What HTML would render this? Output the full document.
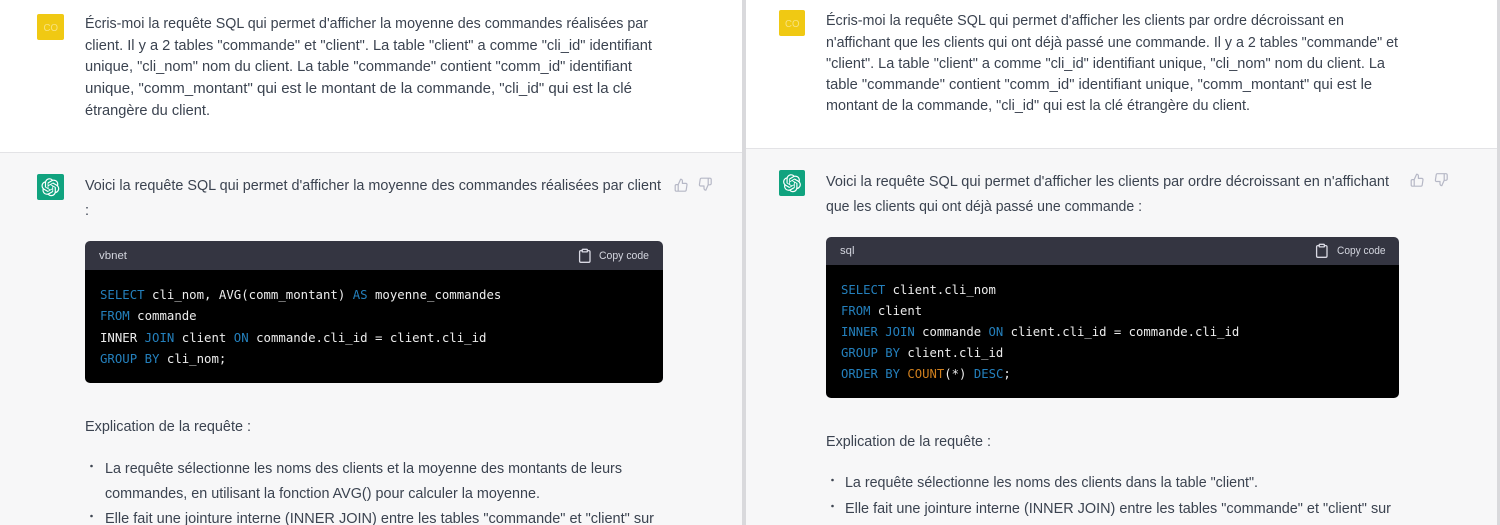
<!DOCTYPE html>
<html lang="fr"><head><meta charset="utf-8"><title>Requêtes SQL</title>
<style>
html,body{margin:0;padding:0;background:#fff;width:1500px;height:525px;overflow:hidden}
svg{display:block}
.t{font-family:"Liberation Sans",sans-serif;font-size:14.4px;fill:#3b4350}
.c{font-family:"DejaVu Sans Mono","Liberation Mono",monospace;font-size:12.35px;fill:#ececec}
.r{font-size:12.25px}
.k{fill:#2480bd}.o{fill:#cf7f1e}
.h{font-family:"Liberation Sans",sans-serif;font-size:10.8px;fill:#d3d5de}
.ic{fill:none;stroke:#b6b8c6;stroke-width:2;stroke-linecap:round;stroke-linejoin:round}
.cp{fill:none;stroke:#d9d9e3;stroke-width:2;stroke-linecap:round;stroke-linejoin:round}
</style></head><body>
<svg width="1500" height="525" viewBox="0 0 1500 525" xmlns="http://www.w3.org/2000/svg">
<defs><path id="g" fill="#fff" d="M37.5324 16.8707C37.9808 15.5241 38.1363 14.0974 37.9886 12.6859C37.8409 11.2744 37.3934 9.91076 36.676 8.68622C35.6126 6.83404 33.9882 5.3676 32.0373 4.4985C30.0864 3.62941 27.9098 3.40259 25.8215 3.85078C24.8796 2.7893 23.7219 1.94125 22.4257 1.36341C21.1295 0.785575 19.7249 0.491269 18.3058 0.500197C16.1708 0.495044 14.0893 1.16803 12.3614 2.42214C10.6335 3.67624 9.34853 5.44666 8.6917 7.47815C7.30085 7.76286 5.98686 8.3414 4.8377 9.17505C3.68854 10.0087 2.73073 11.0782 2.02839 12.312C0.956464 14.1591 0.498905 16.2988 0.721698 18.4228C0.944492 20.5467 1.83612 22.5449 3.268 24.1293C2.81966 25.4759 2.66413 26.9026 2.81182 28.3141C2.95951 29.7256 3.40701 31.0892 4.12437 32.3138C5.18791 34.1659 6.8123 35.6322 8.76321 36.5013C10.7141 37.3704 12.8907 37.5973 14.9789 37.1492C15.9208 38.2107 17.0786 39.0587 18.3747 39.6366C19.6709 40.2144 21.0755 40.5087 22.4946 40.4998C24.6307 40.5054 26.7133 39.8321 28.4418 38.5772C30.1704 37.3223 31.4556 35.5506 32.1119 33.5179C33.5027 33.2332 34.8167 32.6547 35.9659 31.821C37.115 30.9874 38.0728 29.9178 38.7752 28.684C39.8458 26.8371 40.3023 24.6979 40.0789 22.5748C39.8556 20.4517 38.9639 18.4544 37.5324 16.8707ZM22.4978 37.8849C20.7443 37.8874 19.0459 37.2733 17.6994 36.1501C17.7601 36.117 17.8666 36.0586 17.936 36.0161L25.9004 31.4156C26.1003 31.3019 26.2663 31.137 26.3813 30.9378C26.4964 30.7386 26.5563 30.5124 26.5549 30.2825V19.0542L29.9213 20.998C29.9389 21.0068 29.9541 21.0198 29.9656 21.0359C29.977 21.052 29.9842 21.0707 29.9867 21.0902V30.3889C29.9842 32.375 29.1946 34.2791 27.7909 35.6841C26.3872 37.0892 24.4838 37.8806 22.4978 37.8849ZM6.39227 31.0064C5.51397 29.4888 5.19742 27.7107 5.49804 25.9832C5.55718 26.0187 5.66048 26.0818 5.73461 26.1244L13.699 30.7248C13.8975 30.8408 14.1233 30.902 14.3532 30.902C14.583 30.902 14.8088 30.8408 15.0073 30.7248L24.731 25.1103V28.9979C24.7321 29.0177 24.7283 29.0376 24.7199 29.0556C24.7115 29.0736 24.6988 29.0893 24.6829 29.1012L16.6317 33.7497C14.9096 34.7416 12.8643 35.0097 10.9447 34.4954C9.02506 33.9811 7.38785 32.7263 6.39227 31.0064ZM4.29707 13.6194C5.17156 12.0998 6.55279 10.9364 8.19885 10.3327C8.19885 10.4013 8.19491 10.5228 8.19491 10.6071V19.808C8.19351 20.0378 8.25334 20.2638 8.36823 20.4629C8.48312 20.6619 8.64893 20.8267 8.84863 20.9404L18.5723 26.5542L15.206 28.4979C15.1894 28.5089 15.1703 28.5155 15.1505 28.5173C15.1307 28.5191 15.1107 28.516 15.0924 28.5082L7.04046 23.8557C5.32135 22.8601 4.06716 21.2235 3.55289 19.3046C3.03862 17.3858 3.30624 15.3413 4.29707 13.6194ZM31.955 20.0556L22.2312 14.4411L25.5976 12.4981C25.6142 12.4872 25.6333 12.4805 25.6531 12.4787C25.6729 12.4769 25.6928 12.4801 25.7111 12.4879L33.7631 17.1364C34.9967 17.849 36.0017 18.8982 36.6606 20.1613C37.3194 21.4244 37.6047 22.849 37.4832 24.2684C37.3617 25.6878 36.8382 27.0432 35.9743 28.1759C35.1103 29.3086 33.9415 30.1717 32.6047 30.6641C32.6047 30.5947 32.6047 30.4733 32.6047 30.3889V21.188C32.6066 20.9586 32.5474 20.7328 32.4332 20.5338C32.319 20.3348 32.154 20.1698 31.955 20.0556ZM35.3055 15.0128C35.2464 14.9765 35.1431 14.9142 35.069 14.8717L27.1045 10.2712C26.906 10.1554 26.6803 10.0943 26.4504 10.0943C26.2206 10.0943 25.9948 10.1554 25.7963 10.2712L16.0726 15.8858V11.9982C16.0715 11.9783 16.0753 11.9585 16.0837 11.9405C16.0921 11.9225 16.1048 11.9068 16.1207 11.8949L24.1719 7.25025C25.4053 6.53903 26.8158 6.19376 28.2383 6.25482C29.6608 6.31589 31.0364 6.78077 32.2044 7.59508C33.3723 8.40939 34.2842 9.53945 34.8334 10.8531C35.3826 12.1667 35.5464 13.6095 35.3055 15.0128ZM14.2424 21.9419L10.8752 19.9981C10.8576 19.9893 10.8423 19.9763 10.8309 19.9602C10.8195 19.9441 10.8122 19.9254 10.8098 19.9058V10.6071C10.8107 9.18295 11.2173 7.78848 11.9819 6.58696C12.7466 5.38544 13.8377 4.42659 15.1275 3.82264C16.4173 3.21869 17.8524 2.99464 19.2649 3.1767C20.6775 3.35876 22.0089 3.93941 23.1034 4.85067C23.0427 4.88379 22.937 4.94215 22.8668 4.98473L14.9024 9.58517C14.7025 9.69878 14.5366 9.86356 14.4215 10.0626C14.3065 10.2616 14.2466 10.4877 14.2479 10.7175L14.2424 21.9419ZM16.071 17.9991L20.4018 15.4978L24.7325 17.9975V22.9985L20.4018 25.4983L16.071 22.9985V17.9991Z"/></defs>

<rect width="1500" height="525" fill="#fff"/>
<rect x="0" y="153" width="742" height="372" fill="#f7f7f8"/>
<rect x="0" y="152" width="742" height="1" fill="#e3e3e6"/>
<rect x="746" y="149" width="751" height="376" fill="#f7f7f8"/>
<rect x="746" y="148" width="751" height="1" fill="#e3e3e6"/>
<rect x="742" y="0" width="4" height="525" fill="#d9d9dc"/>
<rect x="1497" y="0" width="3" height="525" fill="#d9d9dc"/>

<!-- LEFT user -->
<rect x="37" y="14" width="27" height="26" rx="2" fill="#f0c913"/>
<text x="43.500" y="31" textLength="14.500" lengthAdjust="spacingAndGlyphs" font-family="Liberation Sans,sans-serif" font-size="10.500" fill="#f8e27e">CO</text>
<text class="t" x="85" y="28" textLength="563" lengthAdjust="spacingAndGlyphs">Écris-moi la requête SQL qui permet d'afficher la moyenne des commandes réalisées par</text>
<text class="t" x="85" y="50" textLength="567" lengthAdjust="spacingAndGlyphs">client. Il y a 2 tables "commande" et "client". La table "client" a comme "cli_id" identifiant</text>
<text class="t" x="85" y="71" textLength="547" lengthAdjust="spacingAndGlyphs">unique, "cli_nom" nom du client. La table "commande" contient "comm_id" identifiant</text>
<text class="t" x="85" y="93" textLength="547" lengthAdjust="spacingAndGlyphs">unique, "comm_montant" qui est le montant de la commande, "cli_id" qui est la clé</text>
<text class="t" x="85" y="115" textLength="125" lengthAdjust="spacingAndGlyphs">étrangère du client.</text>

<!-- LEFT assistant -->
<rect x="37" y="174" width="27" height="26" rx="2" fill="#10a37f"/>
<use href="#g" transform="translate(41.2,178) scale(.45)"/>
<text class="t" x="85" y="190" textLength="576" lengthAdjust="spacingAndGlyphs">Voici la requête SQL qui permet d'afficher la moyenne des commandes réalisées par client</text>
<text class="t" x="85" y="215">:</text>
<g transform="translate(674,178) scale(.6)"><path class="ic" d="M14 9V5a3 3 0 0 0-3-3l-4 9v11h11.28a2 2 0 0 0 2-1.7l1.38-9a2 2 0 0 0-2-2.3zM7 22H4a2 2 0 0 1-2-2v-7a2 2 0 0 1 2-2h3"/></g>
<g transform="translate(698,177) scale(.6)"><path class="ic" d="M10 15v4a3 3 0 0 0 3 3l4-9V2H5.72a2 2 0 0 0-2 1.7l-1.38 9a2 2 0 0 0 2 2.3zm7-13h2.67A2.31 2.31 0 0 1 22 4v7a2.31 2.31 0 0 1-2.33 2H17"/></g>

<path d="M90 241H658a5 5 0 0 1 5 5V270H85V246a5 5 0 0 1 5-5Z" fill="#343541"/>
<path d="M85 270H663V378a5 5 0 0 1-5 5H90a5 5 0 0 1-5-5Z" fill="#000"/>
<text class="h" x="99" y="259" textLength="28" lengthAdjust="spacingAndGlyphs">vbnet</text>
<g transform="translate(577,248) scale(.65)"><path class="cp" d="M16 4h2a2 2 0 0 1 2 2v14a2 2 0 0 1-2 2H6a2 2 0 0 1-2-2V6a2 2 0 0 1 2-2h2"/><rect class="cp" x="8" y="2" width="8" height="4" rx="1"/></g>
<text class="h" x="599" y="259" textLength="50" lengthAdjust="spacingAndGlyphs">Copy code</text>
<text class="c" x="100" y="299" xml:space="preserve"><tspan class="k">SELECT</tspan> cli_nom, AVG(comm_montant) <tspan class="k">AS</tspan> moyenne_commandes</text>
<text class="c" x="100" y="320" xml:space="preserve"><tspan class="k">FROM</tspan> commande</text>
<text class="c" x="100" y="342" xml:space="preserve">INNER <tspan class="k">JOIN</tspan> client <tspan class="k">ON</tspan> commande.cli_id = client.cli_id</text>
<text class="c" x="100" y="363" xml:space="preserve"><tspan class="k">GROUP BY</tspan> cli_nom;</text>

<text class="t" x="85" y="431" textLength="166" lengthAdjust="spacingAndGlyphs">Explication de la requête :</text>
<circle cx="91.5" cy="466" r="1.3" fill="#3f4652"/>
<text class="t" x="105" y="473" textLength="517" lengthAdjust="spacingAndGlyphs">La requête sélectionne les noms des clients et la moyenne des montants de leurs</text>
<text class="t" x="105" y="498" textLength="435" lengthAdjust="spacingAndGlyphs">commandes, en utilisant la fonction AVG() pour calculer la moyenne.</text>
<circle cx="91.5" cy="516" r="1.3" fill="#3f4652"/>
<text class="t" x="105" y="523" textLength="549" lengthAdjust="spacingAndGlyphs">Elle fait une jointure interne (INNER JOIN) entre les tables "commande" et "client" sur</text>

<!-- RIGHT user -->
<rect x="779" y="10" width="26" height="26" rx="2" fill="#f0c913"/>
<text x="785" y="27" textLength="14.500" lengthAdjust="spacingAndGlyphs" font-family="Liberation Sans,sans-serif" font-size="10.500" fill="#f8e27e">CO</text>
<text class="t" x="826" y="25" textLength="518" lengthAdjust="spacingAndGlyphs">Écris-moi la requête SQL qui permet d'afficher les clients par ordre décroissant en</text>
<text class="t" x="826" y="47" textLength="572" lengthAdjust="spacingAndGlyphs">n'affichant que les clients qui ont déjà passé une commande. Il y a 2 tables "commande" et</text>
<text class="t" x="826" y="68" textLength="559" lengthAdjust="spacingAndGlyphs">"client". La table "client" a comme "cli_id" identifiant unique, "cli_nom" nom du client. La</text>
<text class="t" x="826" y="89" textLength="546" lengthAdjust="spacingAndGlyphs">table "commande" contient "comm_id" identifiant unique, "comm_montant" qui est le</text>
<text class="t" x="826" y="110" textLength="424" lengthAdjust="spacingAndGlyphs">montant de la commande, "cli_id" qui est la clé étrangère du client.</text>

<!-- RIGHT assistant -->
<rect x="779" y="170" width="26" height="26" rx="2" fill="#10a37f"/>
<use href="#g" transform="translate(782.8,174) scale(.45)"/>
<text class="t" x="826" y="186" textLength="563" lengthAdjust="spacingAndGlyphs">Voici la requête SQL qui permet d'afficher les clients par ordre décroissant en n'affichant</text>
<text class="t" x="826" y="211" textLength="316" lengthAdjust="spacingAndGlyphs">que les clients qui ont déjà passé une commande :</text>
<g transform="translate(1410,173) scale(.6)"><path class="ic" d="M14 9V5a3 3 0 0 0-3-3l-4 9v11h11.28a2 2 0 0 0 2-1.7l1.38-9a2 2 0 0 0-2-2.3zM7 22H4a2 2 0 0 1-2-2v-7a2 2 0 0 1 2-2h3"/></g>
<g transform="translate(1434,172.500) scale(.6)"><path class="ic" d="M10 15v4a3 3 0 0 0 3 3l4-9V2H5.72a2 2 0 0 0-2 1.7l-1.38 9a2 2 0 0 0 2 2.3zm7-13h2.67A2.31 2.31 0 0 1 22 4v7a2.31 2.31 0 0 1-2.33 2H17"/></g>

<path d="M831 237H1394a5 5 0 0 1 5 5V265H826V242a5 5 0 0 1 5-5Z" fill="#343541"/>
<path d="M826 265H1399V393a5 5 0 0 1-5 5H831a5 5 0 0 1-5-5Z" fill="#000"/>
<text class="h" x="840" y="254" textLength="14.500" lengthAdjust="spacingAndGlyphs">sql</text>
<g transform="translate(1314,243) scale(.65)"><path class="cp" d="M16 4h2a2 2 0 0 1 2 2v14a2 2 0 0 1-2 2H6a2 2 0 0 1-2-2V6a2 2 0 0 1 2-2h2"/><rect class="cp" x="8" y="2" width="8" height="4" rx="1"/></g>
<text class="h" x="1337" y="254" textLength="48.500" lengthAdjust="spacingAndGlyphs">Copy code</text>
<text class="c r" x="841" y="294" xml:space="preserve"><tspan class="k">SELECT</tspan> client.cli_nom</text>
<text class="c r" x="841" y="315" xml:space="preserve"><tspan class="k">FROM</tspan> client</text>
<text class="c r" x="841" y="336" xml:space="preserve"><tspan class="k">INNER JOIN</tspan> commande <tspan class="k">ON</tspan> client.cli_id = commande.cli_id</text>
<text class="c r" x="841" y="357" xml:space="preserve"><tspan class="k">GROUP BY</tspan> client.cli_id</text>
<text class="c r" x="841" y="378" xml:space="preserve"><tspan class="k">ORDER BY</tspan> <tspan class="o">COUNT</tspan>(*) <tspan class="k">DESC</tspan>;</text>

<text class="t" x="826" y="446" textLength="165" lengthAdjust="spacingAndGlyphs">Explication de la requête :</text>
<circle cx="832.500" cy="480" r="1.3" fill="#3f4652"/>
<text class="t" x="845" y="487" textLength="413" lengthAdjust="spacingAndGlyphs">La requête sélectionne les noms des clients dans la table "client".</text>
<circle cx="832.500" cy="506" r="1.3" fill="#3f4652"/>
<text class="t" x="845" y="513" textLength="546" lengthAdjust="spacingAndGlyphs">Elle fait une jointure interne (INNER JOIN) entre les tables "commande" et "client" sur</text>
</svg>
</body></html>
